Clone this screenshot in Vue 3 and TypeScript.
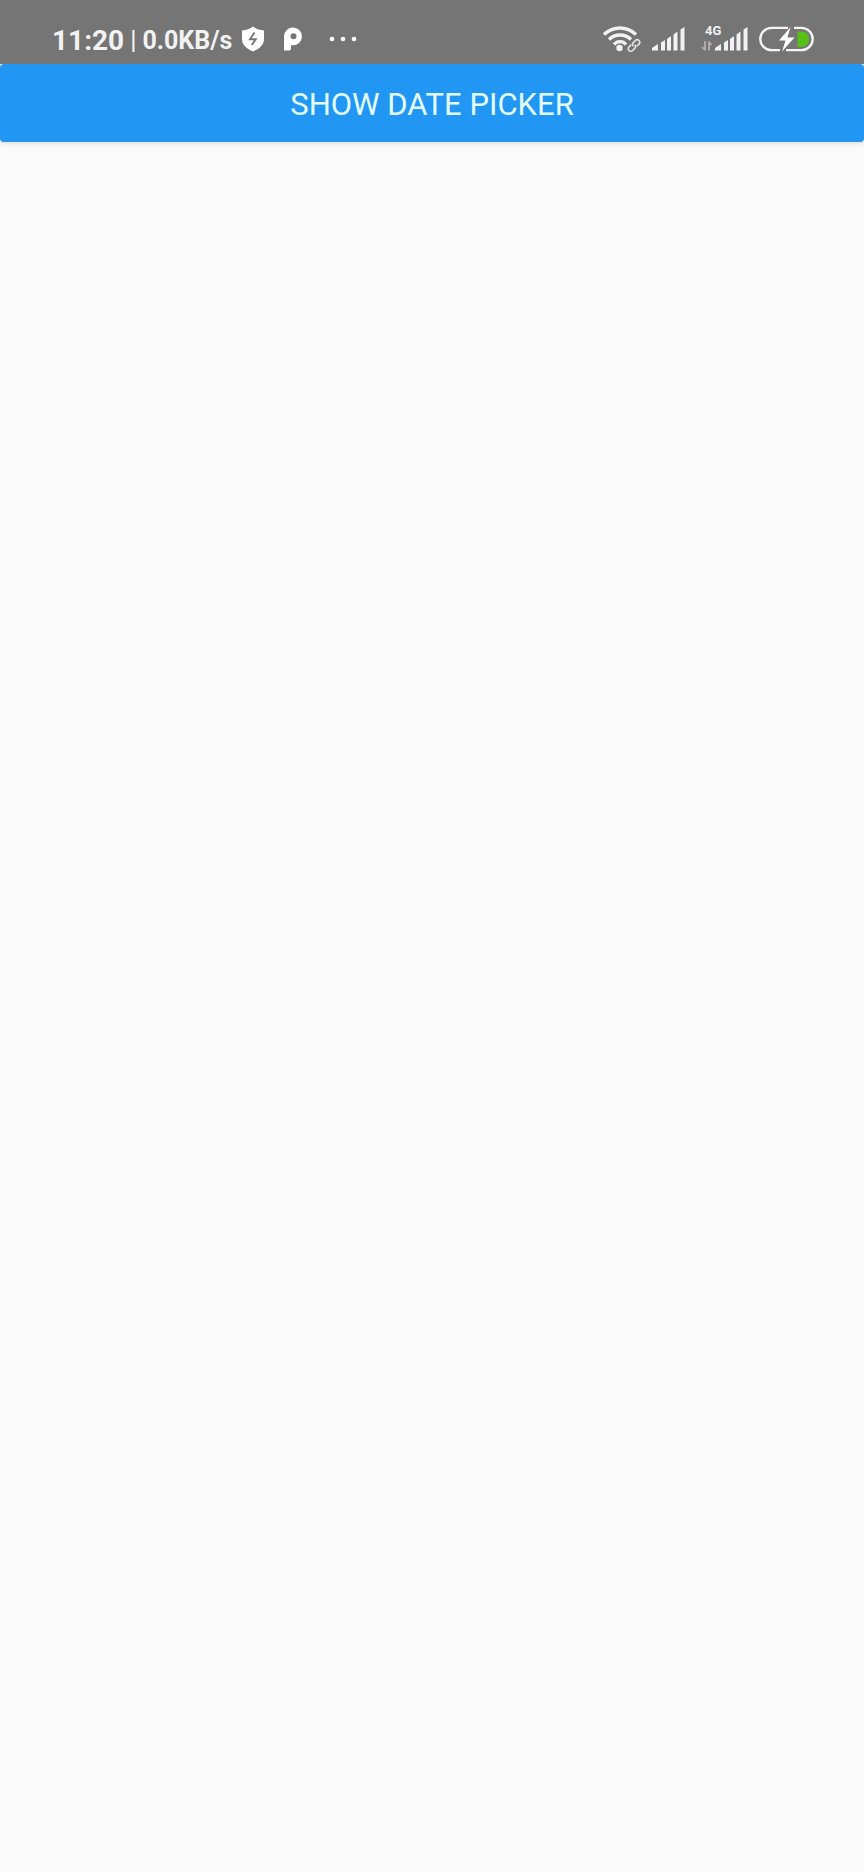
<script setup lang="ts">
import { ref } from 'vue'

const time = ref<string>('11:20')
const speed = ref<string>('0.0KB/s')
</script>

<template>
  <div class="screen">
    <header class="status">
      <div class="group left">
        <span class="time">{{ time }}</span>
        <span class="bar">|</span>
        <span class="speed">{{ speed }}</span>
        <svg class="shield" width="22" height="26" viewBox="0 0 22 26" aria-hidden="true">
          <path d="M11 0.500C14 2.800 17.500 4 22 4.500V13C22 19 17 23 11 25.500C5 23 0 19 0 13V4.500C4.500 4 8 2.800 11 0.500Z" fill="#fff" />
          <path d="M12.500 6.500L8 13.300H13.700L9.800 19" fill="none" stroke="#757575" stroke-width="1.900" />
        </svg>
        <svg class="parking" width="19" height="24" viewBox="0 0 19 24" aria-hidden="true">
          <path d="M0 23.500V9A9 9 0 0 1 9 0.500A8.800 8.800 0 0 1 9 18.300H7V21.500Q7 23.500 5 23.500Z" fill="#fff" />
          <circle cx="9.500" cy="9.200" r="3" fill="#757575" />
        </svg>
        <svg class="more" width="28" height="6" viewBox="0 0 28 6" aria-hidden="true">
          <g fill="#fff">
            <circle cx="3" cy="3" r="2.300" />
            <circle cx="14" cy="3" r="2.300" />
            <circle cx="25" cy="3" r="2.300" />
          </g>
        </svg>
      </div>

      <div class="group right">
        <svg width="38" height="26" viewBox="0 0 38 26" role="img" aria-label="Wi-Fi">
          <g fill="none" stroke="#f2f2f2" stroke-width="3.400">
            <path d="M1 8.500Q8 2 17 2T33 8.500" />
            <path d="M6 13.500Q10.500 9 17 9T28 13.500" />
            <path d="M11 18.500Q13.500 15.600 17 15.600T23 18.500" />
          </g>
          <circle cx="16.500" cy="22" r="3.200" fill="#f2f2f2" />
          <rect x="23.500" y="15" width="15" height="9" rx="4.500" fill="#757575" transform="rotate(-45 31 19.500)" />
          <g fill="none" stroke="#e4e4e4" stroke-width="1.600" transform="rotate(-45 31 19.500)">
            <path d="M29.500 17H26.500A2.500 2.500 0 0 0 26.500 22H29.500A2.500 2.500 0 0 0 32 19.500" />
            <path d="M32.500 22H35.500A2.500 2.500 0 0 0 35.500 17H32.500A2.500 2.500 0 0 0 30 19.500" />
          </g>
        </svg>
        <svg width="33" height="26" viewBox="0 0 33 26" role="img" aria-label="Signal, SIM 1">
          <path d="M0 24.500V22L6 18V24.500ZM9 24.500V16.500L13 14V24.500ZM15 24.500V13L19 10V24.500ZM21.500 24.500V8.500L25.500 5.500V24.500ZM28.500 24.500V3.500L32.500 1V24.500Z" fill="#f2f2f2" />
        </svg>
        <svg class="sim2" width="47" height="36" viewBox="0 -4 47 36" role="img" aria-label="4G signal, SIM 2">
          <text class="net" x="4" y="10">4G</text>
          <path d="M4 16V25.500M4 25L1 22M8 25.500V16.500M8 17L10.500 20" fill="none" stroke="#b4b4b4" stroke-width="1.700" />
          <path d="M14 25.500V23L20 19V25.500ZM23 25.500V17.500L27 15V25.500ZM29 25.500V14L33 11V25.500ZM35.500 25.500V9.500L39.500 6.500V25.500ZM42.500 25.500V4.500L46.500 2V25.500Z" fill="#f2f2f2" />
        </svg>
        <svg class="battery" width="55" height="26" viewBox="0 0 55 26" role="img" aria-label="Battery charging">
          <path d="M29 1.800H12.500A11.200 11.200 0 0 0 12.500 24.200H21M27 24.200H42.500A11.200 11.200 0 0 0 42.500 1.800H35" fill="none" stroke="#f5f5f5" stroke-width="2.300" />
          <path d="M38.500 5.500H42C47 5.500 50 8.500 50 13S47 21 42 21H38.500Z" fill="#57c116" />
          <path d="M31.500 1L20 14.500H26.500L23 25.500L35.500 11.500H28.500Z" fill="#fff" />
        </svg>
      </div>
    </header>

    <main>
      <button type="button" class="picker">SHOW DATE PICKER</button>
    </main>
  </div>
</template>

<style>
body {
  background: #fafafa;
}
</style>

<style scoped>
.screen {
  min-height: 100vh;
  background: #fafafa;
  font-family: Roboto, sans-serif;
}

.status {
  box-sizing: border-box;
  height: 64px;
  padding: 14px 50px 0 52px;
  display: flex;
  align-items: center;
  justify-content: space-between;
  background: #757575;
  color: #f2f2f2;
  font-size: 25px;
  font-weight: 700;
  line-height: 32px;
}

.group {
  display: flex;
  align-items: center;
}

.group svg {
  flex: none;
}

.group span {
  padding-top: 3px;
}

.time {
  font-size: 28px;
}

.bar {
  margin: 0 6px;
  font-weight: 500;
}

.shield {
  margin-left: 10px;
}

.parking {
  margin-left: 20px;
}

.more {
  margin-left: 26px;
}

.right {
  gap: 11px;
}

.sim2 {
  margin-left: 5px;
}

.net {
  fill: #f2f2f2;
  font-size: 13px;
  font-weight: 700;
}

.picker {
  display: block;
  width: 100%;
  padding: 23px 16px 19px;
  border: 0;
  border-radius: 4px;
  background: #2196f3;
  box-shadow: 0 2px 4px rgba(0, 0, 0, 0.1);
  color: #e3fdff;
  font-family: inherit;
  font-size: 31px;
  font-weight: 400;
  line-height: 36px;
  cursor: pointer;
}
</style>
